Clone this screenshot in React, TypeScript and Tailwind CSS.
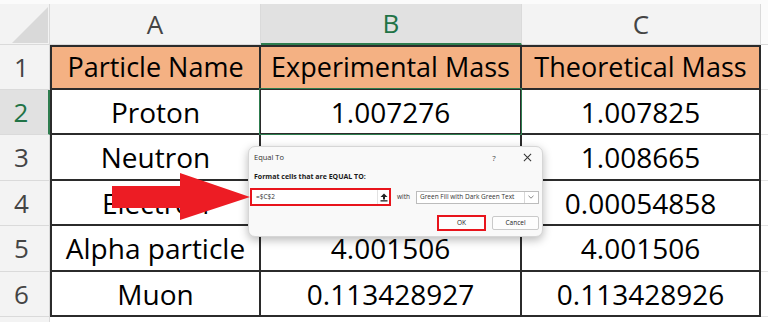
import React from "react";

const rows: [string, string, string][] = [
  ["Proton", "1.007276", "1.007825"],
  ["Neutron", "", "1.008665"],
  ["Electron", "", "0.00054858"],
  ["Alpha particle", "4.001506", "4.001506"],
  ["Muon", "0.113428927", "0.113428926"],
];

const rowH = ["h-[45px]", "h-[46px]", "h-[45px]", "h-[46px]", "h-[45px]"];

function Corner() {
  return (
    <div className="w-[50px] h-[41px] bg-[#f3f3f3] border-r border-b border-[#dadada] relative">
      <svg width="50" height="41" className="absolute left-0 top-0">
        <polygon points="12,39 48,39 48,3" fill="#d9d9d9" />
      </svg>
    </div>
  );
}

function UploadIcon() {
  return (
    <svg width="8" height="9" viewBox="0 0 8 9">
      <polygon points="4,0.5 7.5,4 0.5,4" fill="#222" />
      <rect x="3" y="3.5" width="2" height="3" fill="#222" />
      <rect x="0.5" y="7.2" width="7" height="1.3" fill="#222" />
    </svg>
  );
}

function Dialog() {
  return (
    <div className="absolute left-[248px] top-[146px] w-[295px] h-[91px] rounded-[7px] bg-[#f9f9f9] border border-[#d6d6d6] shadow-[0_3px_10px_rgba(0,0,0,0.28)] font-['Open_Sans',sans-serif] text-[#222] leading-none">
      <div className="h-[21px] flex items-center pl-[5px] pr-[9px]">
        <span className="text-[7.5px] leading-none text-[#333]">Equal To</span>
        <span className="ml-auto w-[12px] text-center text-[8px] leading-none text-[#444]">?</span>
        <span className="ml-[21px] w-[12px] flex justify-center">
          <svg width="9" height="9" viewBox="0 0 8 8">
            <path d="M0.8 0.8 L7.2 7.2 M7.2 0.8 L0.8 7.2" stroke="#333" strokeWidth="0.9" />
          </svg>
        </span>
      </div>
      <div className="h-[17px] flex items-center pl-[5px] text-[7px] leading-none font-bold text-[#1a1a1a] whitespace-nowrap">
        Format cells that are EQUAL TO:
      </div>
      <div className="mt-[3px] flex items-center pl-[1px]">
        <div className="w-[141px] h-[18px] border-2 border-[#e8141c] bg-white flex items-center">
          <span className="pl-[4px] text-[6.5px] leading-none text-[#333]">=$C$2</span>
          <span className="ml-auto h-full w-[12px] border-l border-[#e2e2e2] flex items-center justify-center">
            <UploadIcon />
          </span>
        </div>
        <span className="ml-[6px] text-[6.5px] leading-none text-[#333]">with</span>
        <div className="ml-[6px] w-[123px] h-[13px] border border-[#bcbcbc] bg-white flex items-center">
          <span className="pl-[3px] text-[6.5px] leading-none text-[#333] whitespace-nowrap">Green Fill with Dark Green Text</span>
          <span className="ml-auto h-full w-[14px] border-l border-[#d8d8d8] flex items-center justify-center">
            <svg width="6" height="4" viewBox="0 0 6 4">
              <path d="M0.5 0.8 L3 3.2 L5.5 0.8" stroke="#666" strokeWidth="0.8" fill="none" />
            </svg>
          </span>
        </div>
      </div>
      <div className="mt-[9px] flex items-center justify-end pr-[3px]">
        <div className="w-[49px] h-[16px] border-2 border-[#e8141c] bg-[#fdfdfd] flex items-center justify-center text-[6.5px] leading-none text-[#222]">
          OK
        </div>
        <div className="ml-[6px] w-[47px] h-[14px] border border-[#c9c9c9] rounded-[2px] bg-[#fdfdfd] flex items-center justify-center text-[6.5px] leading-none text-[#222]">
          Cancel
        </div>
      </div>
    </div>
  );
}

function Arrow() {
  return (
    <svg width="768" height="322" className="absolute left-0 top-0 pointer-events-none">
      <polygon
        points="112,186 180,186 180,173 250,197 180,220 180,208 112,208"
        fill="#ed1c24"
      />
    </svg>
  );
}

export default function App() {
  const headerCell = "bg-[#f4b183] border-t-2 border-b-2 border-r-2 border-[#2b2b2b] flex items-center justify-center text-[27px] text-black whitespace-nowrap";
  const dataCell = "bg-white border-b-2 border-r-2 border-[#2b2b2b] flex items-center justify-center text-[28px] text-black whitespace-nowrap";
  const rowHead = "w-[50px] pr-[6px] bg-[#f3f3f3] border-r border-b border-[#dadada] flex items-center justify-center text-[26px] text-[#444]";
  return (
    <div className="relative w-[768px] h-[322px] bg-white overflow-hidden font-['Open_Sans',sans-serif]">
      <div className="h-[4px] bg-[#fbfbfb]" />
      {/* column headers */}
      <div className="flex h-[41px]">
        <Corner />
        <div className="w-[211px] bg-[#f3f3f3] border-r border-b border-[#dadada] flex items-center justify-center text-[26px] text-[#444]">A</div>
        <div className="w-[261px] bg-[#e1e1e1] border-r border-[#dadada] border-b-2 border-b-[#2e7d4f] flex items-center justify-center text-[26px] text-[#217346]">B</div>
        <div className="w-[239px] bg-[#f3f3f3] border-r border-b border-[#dadada] flex items-center justify-center text-[26px] text-[#444]">C</div>
        <div className="flex-1 bg-[#fbfbfb] border-b border-[#dadada]" />
      </div>
      {/* row 1 */}
      <div className="flex h-[45px]">
        <div className={rowHead}>1</div>
        <div className={`w-[211px] border-l-2 ${headerCell}`}>Particle Name</div>
        <div className={`w-[261px] ${headerCell} border-t-0`}>Experimental Mass</div>
        <div className={`w-[239px] ${headerCell}`}>Theoretical Mass</div>
        <div className="flex-1 border-b border-[#e4e4e4]" />
      </div>
      {rows.map((r, i) => (
        <div key={i} className={`flex ${rowH[i]}`}>
          {i === 0 ? (
            <div className="w-[50px] pr-[6px] bg-[#e1e1e1] border-r-2 border-r-[#2e7d4f] border-b border-[#dadada] flex items-center justify-center text-[26px] text-[#217346]">
              {i + 2}
            </div>
          ) : (
            <div className={rowHead}>{i + 2}</div>
          )}
          <div className={`w-[211px] border-l-2 ${dataCell} ${i === 0 ? "border-l-0" : ""}`}>{r[0]}</div>
          <div className={`w-[261px] ${dataCell} relative`}>
            {r[1]}
            {i === 0 && (
              <div className="absolute left-[-2px] top-[-2px] right-[-2px] bottom-[-2px] border-[1.5px] border-[#2e7d4f]" />
            )}
          </div>
          <div className={`w-[239px] ${dataCell}`}>{r[2]}</div>
          <div className="flex-1 border-b border-[#e4e4e4]" />
        </div>
      ))}
      <div className="flex h-[5px]">
        <div className="w-[50px] bg-[#f3f3f3] border-r border-[#dadada]" />
      </div>
      <Dialog />
      <Arrow />
    </div>
  );
}
